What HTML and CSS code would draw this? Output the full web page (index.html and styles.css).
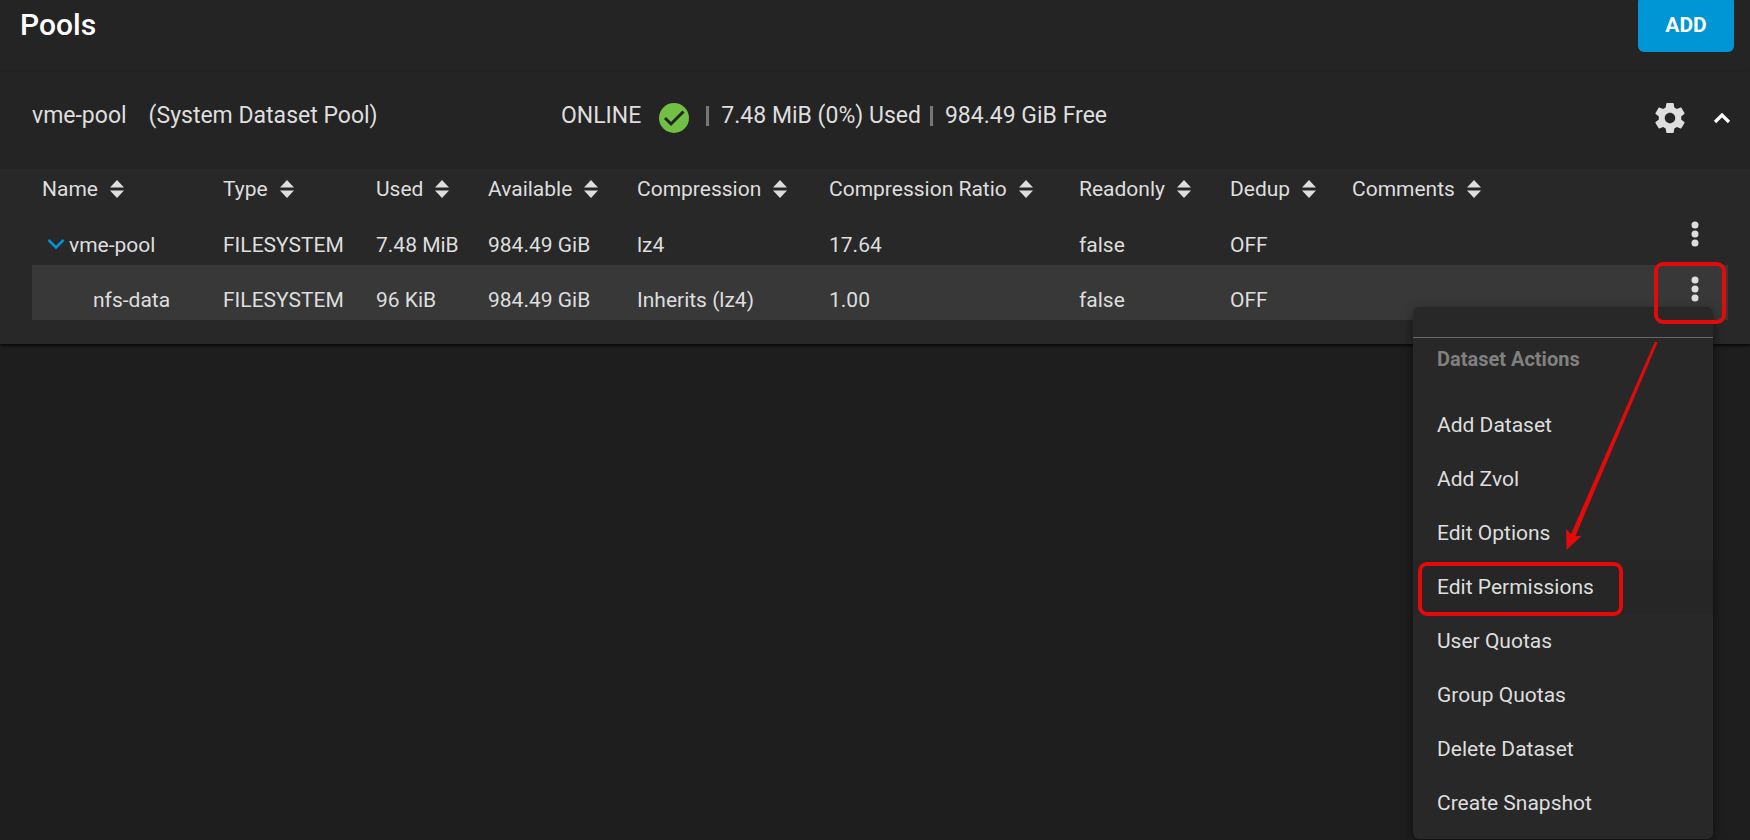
FILE: index.html
```html
<!DOCTYPE html>
<html lang="en">
<head>
    <meta charset="UTF-8">
    <meta name="viewport" content="width=device-width, initial-scale=1.0">
    <title>Pools</title>
    <link rel="stylesheet" href="styles.css">
</head>
<body>

<svg width="0" height="0" class="defs" aria-hidden="true">
    <symbol id="sort" viewBox="0 0 14 18"><path d="M7 0L14 7.5H0zM7 18L0 10.5H14z"/></symbol>
    <symbol id="dots" viewBox="0 0 8 26"><circle cx="4" cy="4" r="3.5"/><circle cx="4" cy="13" r="3.5"/><circle cx="4" cy="22" r="3.5"/></symbol>
</svg>

<header class="page-header">
    <h1>Pools</h1>
    <button class="add-button">ADD</button>
</header>

<main class="pool">
    <div class="pool-header">
        <div class="pool-name">
            <span>vme-pool</span>
            <span>(System Dataset Pool)</span>
        </div>
        <div class="pool-status">
            <span>ONLINE</span>
            <svg class="check" viewBox="0 0 30 30">
                <circle cx="15" cy="15" r="15" fill="#71bf44"/>
                <path d="M6 15l6 6L24.500 8.500" fill="none" stroke="#242424" stroke-width="3"/>
            </svg>
            <span class="divider"></span>
            <span class="used">7.48 MiB (0%) Used</span>
            <span class="divider"></span>
            <span>984.49 GiB Free</span>
        </div>
        <div class="pool-tools">
            <button class="icon-button" aria-label="Pool settings">
                <svg width="36" height="36" viewBox="0 0 24 24" fill="#dedede"><path d="M19.430 12.980c.04-.32.07-.64.07-.98s-.03-.66-.07-.98l2.110-1.650c.19-.15.24-.42.12-.64l-2-3.460c-.12-.22-.39-.3-.61-.22l-2.490 1c-.52-.4-1.080-.73-1.690-.98l-.38-2.650C14.460 2.180 14.250 2 14 2h-4c-.25 0-.46.18-.49.42l-.38 2.650c-.61.25-1.170.59-1.690.98l-2.490-1c-.23-.09-.49 0-.61.22l-2 3.460c-.13.22-.07.49.12.64l2.110 1.650c-.04.32-.07.65-.07.98s.03.66.07.98l-2.110 1.650c-.19.15-.24.42-.12.64l2 3.460c.12.22.39.3.61.22l2.490-1c.52.4 1.080.73 1.690.98l.38 2.650c.03.24.24.42.49.42h4c.25 0 .46-.18.49-.42l.38-2.650c.61-.25 1.170-.59 1.690-.98l2.490 1c.23.09.49 0 .61-.22l2-3.460c.12-.22.07-.49-.12-.64l-2.110-1.650zM12 15.500c-1.930 0-3.500-1.570-3.500-3.500s1.570-3.500 3.500-3.500 3.500 1.570 3.500 3.500-1.570 3.500-3.500 3.500z"/></svg>
            </button>
            <button class="icon-button" aria-label="Collapse pool">
                <svg width="18" height="12" viewBox="0 0 18 12"><path d="M2 10l7-7 7 7" fill="none" stroke="#fff" stroke-width="3.200"/></svg>
            </button>
        </div>
    </div>

    <div class="pool-body">
        <table class="datasets">
            <colgroup>
                <col class="col-name">
                <col class="col-type">
                <col class="col-used">
                <col class="col-available">
                <col class="col-compression">
                <col class="col-ratio">
                <col class="col-readonly">
                <col class="col-dedup">
                <col>
                <col class="col-actions">
            </colgroup>
            <thead>
                <tr>
                    <th><button class="sort">Name <svg><use href="#sort"/></svg></button></th>
                    <th><button class="sort">Type <svg><use href="#sort"/></svg></button></th>
                    <th><button class="sort">Used <svg><use href="#sort"/></svg></button></th>
                    <th><button class="sort">Available <svg><use href="#sort"/></svg></button></th>
                    <th><button class="sort">Compression <svg><use href="#sort"/></svg></button></th>
                    <th><button class="sort">Compression Ratio <svg><use href="#sort"/></svg></button></th>
                    <th><button class="sort">Readonly <svg><use href="#sort"/></svg></button></th>
                    <th><button class="sort">Dedup <svg><use href="#sort"/></svg></button></th>
                    <th><button class="sort">Comments <svg><use href="#sort"/></svg></button></th>
                    <th></th>
                </tr>
            </thead>
            <tbody>
                <tr>
                    <td>
                        <div class="parent">
                            <button class="icon-button" aria-label="Collapse vme-pool">
                                <svg width="18" height="12" viewBox="0 0 18 12"><path d="M1.500 1L9 8.500 16.500 1" fill="none" stroke="#0095d5" stroke-width="2.500"/></svg>
                            </button>
                            vme-pool
                        </div>
                    </td>
                    <td>FILESYSTEM</td>
                    <td>7.48 MiB</td>
                    <td>984.49 GiB</td>
                    <td>lz4</td>
                    <td>17.64</td>
                    <td>false</td>
                    <td>OFF</td>
                    <td></td>
                    <td class="actions">
                        <button class="icon-button" aria-label="vme-pool actions"><svg class="dots"><use href="#dots"/></svg></button>
                    </td>
                </tr>
                <tr class="active">
                    <td class="child">nfs-data</td>
                    <td>FILESYSTEM</td>
                    <td>96 KiB</td>
                    <td>984.49 GiB</td>
                    <td>Inherits (lz4)</td>
                    <td>1.00</td>
                    <td>false</td>
                    <td>OFF</td>
                    <td></td>
                    <td class="actions">
                        <button class="icon-button" aria-label="nfs-data actions"><svg class="dots"><use href="#dots"/></svg></button>
                        <div class="menu">
                            <h2>Dataset Actions</h2>
                            <button class="menu-item">Add Dataset</button>
                            <button class="menu-item">Add Zvol</button>
                            <button class="menu-item">Edit Options</button>
                            <button class="menu-item marked">Edit Permissions</button>
                            <button class="menu-item">User Quotas</button>
                            <button class="menu-item">Group Quotas</button>
                            <button class="menu-item">Delete Dataset</button>
                            <button class="menu-item">Create Snapshot</button>
                            <svg class="arrow" viewBox="0 0 100 220"><path d="M95 6.500L97.500 7.500 15.500 201 21.500 201 6.500 215 6 194 11 199z" fill="#e20a0a"/></svg>
                        </div>
                        <span class="mark"></span>
                    </td>
                </tr>
            </tbody>
        </table>
    </div>
</main>

</body>
</html>
```

FILE: styles.css
```css
*, *::after { box-sizing: border-box; }
body {
    margin: 0;
    min-height: 100vh;
    background-color: #1e1e1e;
    color: #dedede;
    font-family: Roboto, sans-serif;
    font-size: 21px;
    line-height: 24px;
}
button {
    padding: 0;
    border: none;
    background: none;
    color: inherit;
    font: inherit;
    cursor: pointer;
}
svg { display: block; }
.defs { position: absolute; }

/* the top of the button is scrolled out of view */
.page-header {
    display: flex;
    align-items: center;
    justify-content: space-between;
    margin-top: -4px;
    padding: 0 16px 20px 20px;
    background-color: #242424;
}
h1 { margin: 0; padding-top: 2px; color: #fff; font-size: 30px; font-weight: 500; line-height: 36px; }
.add-button {
    width: 96px;
    height: 56px;
    padding-top: 2px;
    border-radius: 6px;
    background-color: #0095d5;
    color: #fff;
    font-weight: 700;
}

.pool { background-color: #282828; box-shadow: 0 2px 3px rgba(0, 0, 0, 0.7); }
.pool-header {
    display: grid;
    grid-template-columns: 529px 1fr auto;
    align-items: center;
    padding: 24px 19px 33px 32px;
    background-color: #242424;
    font-size: 23px;
    line-height: 36px;
}
.pool-name { display: flex; gap: 22px; }
.pool-status { display: flex; align-items: center; }
.check { width: 30px; height: 30px; margin: 4px 17px 0 18px; }
.divider { width: 3px; height: 20px; margin-right: 12px; background-color: #777; }
.used { margin-right: 9px; }
.pool-tools { display: flex; align-items: center; gap: 25px; padding-top: 4px; }

.pool-body { padding: 0 22px 24px 32px; }
.datasets { width: 100%; table-layout: fixed; border-collapse: collapse; }
.datasets th, .datasets td { padding: 0 0 0 10px; text-align: left; white-space: nowrap; }
.datasets th { height: 45px; padding-bottom: 6px; font-weight: 400; }
.datasets td { height: 55px; padding-top: 14px; }
.datasets tbody tr:first-child td { height: 51px; padding-top: 10px; }
.col-name { width: 181px; }
.col-type { width: 153px; }
.col-used { width: 112px; }
.col-available { width: 149px; }
.col-compression { width: 192px; }
.col-ratio { width: 250px; }
.col-readonly { width: 151px; }
.col-dedup { width: 122px; }
.col-actions { width: 70px; }
.sort { display: flex; align-items: center; gap: 12px; }
.sort svg { width: 14px; height: 18px; fill: #dedede; }
.parent { display: flex; align-items: center; gap: 4px; padding-left: 5px; }
.datasets .child { padding-left: 61px; }
.active { background-color: #383838; }
.datasets .actions { position: relative; padding: 0 0 2px 33px; }
.datasets tbody tr:first-child .actions { padding: 0 0 6px 33px; }
.dots { width: 8px; height: 26px; fill: #dedede; }

.menu {
    position: absolute;
    top: 42px;
    right: 15px;
    width: 300px;
    padding: 30px 0 9px;
    border-radius: 6px;
    background-color: #282828;
    box-shadow: 0 4px 12px rgba(0, 0, 0, 0.5);
}
.menu h2 {
    margin: 0;
    padding: 9px 24px 26px;
    border-top: 1px solid #666;
    color: #808080;
    font-size: 20px;
    font-weight: 700;
    line-height: 25px;
}
.menu-item { display: block; width: 100%; height: 54px; padding: 0 24px; text-align: left; }

/* red highlights */
.marked { position: relative; background-color: #262626; }
.marked::after, .mark {
    content: "";
    position: absolute;
    border: 4px solid #e20a0a;
    border-radius: 9px;
}
.marked::after { top: 2px; left: 5px; width: 205px; height: 54px; }
.mark { top: -3px; right: 2px; width: 72px; height: 62px; }
.arrow { position: absolute; top: 28px; left: 147px; width: 100px; height: 220px; }
```
